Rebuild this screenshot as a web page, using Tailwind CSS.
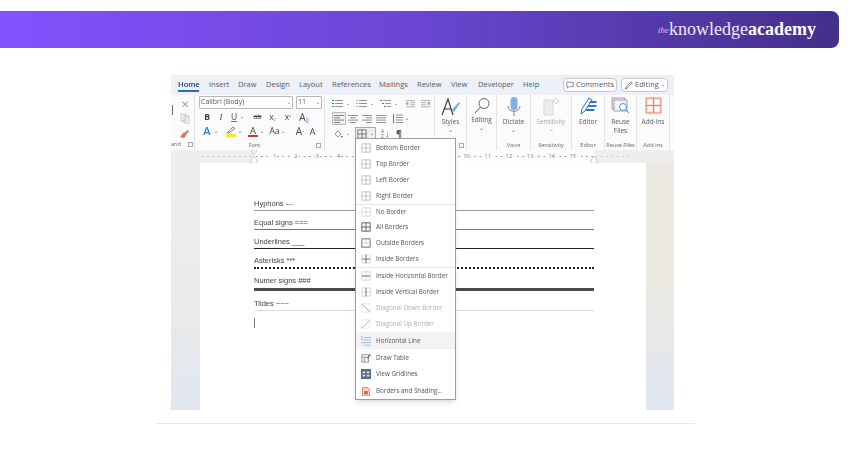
<!DOCTYPE html>
<html lang="en">

<head>
    <meta charset="UTF-8">
    <title>Horizontal Line in Word</title>
    <script src="https://cdn.jsdelivr.net/npm/@tailwindcss/browser@4"></script>
</head>

<body class="bg-white font-['Open_Sans',sans-serif] w-[850px] h-[450px] overflow-hidden">
    <svg class="hidden">
        <symbol id="grid" viewBox="0 0 12 12"><path d="M1 1h10v10H1zM6 1v10M1 6h10" fill="none" stroke="#a0a4aa" stroke-width=".8"/></symbol>
    </svg>

    <!-- banner -->
    <div class="mt-[11px] h-[37px] w-[839px] rounded-r-lg bg-gradient-to-r from-[#8451ff] via-[#6a46d2] to-[#43308a] flex items-center justify-end pr-[23px] font-['Liberation_Serif',serif] text-white">
        <span class="italic text-[9px] text-white/70 mt-[2px]">the</span>
        <span class="text-[18px] font-normal text-white/90">knowledge</span>
        <span class="text-[18px] font-bold">academy</span>
    </div>

    <!-- word window -->
    <div class="relative ml-[171px] mt-[27px] w-[503px] h-[335px] flex flex-col text-[#55595f] blur-[0.4px]">
        <!-- tabs -->
        <div class="h-5 bg-[#edf1f7] flex items-center text-[7.5px] pl-[7px] shrink-0">
            <span class="w-[31px] text-[#24405f] font-semibold relative">Home<span class="absolute left-0 top-[11px] h-[1.5px] w-[21px] bg-[#2b6cb8]"></span></span>
            <span class="w-[29px]">Insert</span>
            <span class="w-[28px]">Draw</span>
            <span class="w-[33px]">Design</span>
            <span class="w-[33px]">Layout</span>
            <span class="w-[47px]">References</span>
            <span class="w-[38px]">Mailings</span>
            <span class="w-[34px]">Review</span>
            <span class="w-[27px]">View</span>
            <span class="w-[45px]">Developer</span>
            <span class="w-[40px]">Help</span>
            <span class="w-[54px] h-[14px] bg-white border border-[#c6c9cd] rounded-sm flex items-center justify-center gap-[2px]">
                <svg class="w-2 h-2" viewBox="0 0 10 10"><path d="M1 1.500h8v5.500H4L2 9V7H1z" fill="none" stroke="#555" stroke-width=".8"/></svg>Comments</span>
            <span class="ml-1 w-[47px] h-[14px] bg-white border border-[#c6c9cd] rounded-sm flex items-center justify-center gap-[2px]">
                <svg class="w-[9px] h-[9px]" viewBox="0 0 10 10"><path d="M1.500 9l1-3L8 1l1.200 1.200L4 7.500z" fill="none" stroke="#555" stroke-width=".8"/></svg>Editing<span class="text-[5px]">⌄</span></span>
        </div>

        <!-- ribbon -->
        <div class="h-[55px] bg-[#fbfbfb] flex shrink-0 text-[6.5px] relative">
            <!-- clipboard -->
            <div class="w-[24px] border-r border-[#e3e3e3] flex flex-col items-end pr-[4px] pt-[2px] text-[#9aa0a6] relative">
                <span class="text-[10px] leading-[14px] pr-[1px]">✕</span>
                <svg class="w-[10px] h-[11px] mt-[2px]" viewBox="0 0 10 11"><path d="M1 1h5v7H1zM4 3h5v7H4z" fill="#f5f5f5" stroke="#b6bbc0" stroke-width=".8"/></svg>
                <svg class="w-[11px] h-[10px] mt-[5px]" viewBox="0 0 11 10"><path d="M1 8l4-5 3 2-3 4z" fill="#e8744f"/><path d="M6 3l3-2 1 2-3 2z" fill="#8a8f96"/></svg>
                <span class="absolute left-[1px] top-[10px] w-px h-[10px] bg-[#666]"></span>
                <span class="absolute left-0 bottom-[2px] text-[5.5px] text-[#666]">and</span>
                <span class="absolute left-[17px] bottom-[3px] w-[5px] h-[5px] border border-[#aaa]"></span>
            </div>
            <!-- font -->
            <div class="w-[130px] border-r border-[#e3e3e3] pl-[4px] pt-[1px] relative">
                <div class="flex gap-[3px] h-[13px] text-[7px]">
                    <div class="w-[94px] bg-white border border-[#b5b8bc] rounded-[1px] flex justify-between items-center px-[1px]"><span>Calibri (Body)</span><span class="text-[5px]">⌄</span></div>
                    <div class="w-[26px] bg-white border border-[#b5b8bc] rounded-[1px] flex justify-between items-center px-[1px]"><span>11</span><span class="text-[5px]">⌄</span></div>
                </div>
                <div class="flex items-center h-[14px] mt-[1px] text-[8.5px] text-[#444]">
                    <b class="w-[14px] text-center ml-[1px] font-bold">B</b><i class="w-[14px] text-center font-['Liberation_Serif']">I</i><span class="w-[12px] text-center underline decoration-[#4a7cc0]">U</span><span class="w-[10px] text-[5px]">⌄</span><span class="w-[15px] text-center line-through text-[7px]">ab</span><span class="w-[15px] text-center">x<sub class="text-[4px] text-[#3f7ec7]">2</sub></span><span class="w-[16px] text-center">x<sup class="text-[4px] text-[#3f7ec7]">2</sup></span><span class="w-[16px] text-center text-[10px]">A<span class="text-[#8c6cd0] text-[8px]">ᵨ</span></span>
                </div>
                <div class="flex items-center h-[15px] text-[11px] text-[#444]">
                    <span class="w-[14px] text-center text-[#2f7fd4] font-semibold ml-[1px]">A</span><span class="w-[10px] text-[5px]">⌄</span>
                    <span class="w-[14px] flex flex-col items-center"><svg class="w-[10px] h-[8px]" viewBox="0 0 9 7"><path d="M1 6l5-5 2 1-5 4z" fill="none" stroke="#666" stroke-width=".8"/></svg><span class="w-[10px] h-[2.500px] bg-[#f7e43a]"></span></span><span class="w-[8px] text-[5px]">⌄</span>
                    <span class="w-[14px] flex flex-col items-center leading-[9px] text-[9.5px]">A<span class="w-[10px] h-[2.500px] bg-[#d9312b]"></span></span><span class="w-[8px] text-[5px]">⌄</span>
                    <span class="w-[13px] text-[8.5px] text-center">Aa</span><span class="w-[12px] text-[5px]">⌄</span>
                    <span class="w-[14px] text-center text-[10px]">A<sup class="text-[4px]">^</sup></span><span class="w-[13px] text-center text-[9px]">A<sup class="text-[4px]">ˇ</sup></span>
                </div>
                <div class="absolute left-0 right-0 bottom-[1px] text-center text-[5.5px] text-[#666] pr-[10px]">Font</div>
                <span class="absolute right-[3px] bottom-[2px] w-[5px] h-[5px] border border-[#aaa]"></span>
            </div>
            <!-- paragraph -->
            <div class="w-[110px] border-r border-[#e3e3e3] pl-[7px] pt-[2px] relative">
                <div class="flex items-center gap-[3px] h-[13px] text-[#2f6fb8]">
                    <svg class="w-[11px] h-[9px]" viewBox="0 0 11 9"><path d="M3 1.500h8M3 4.500h8M3 7.500h8" stroke="#777" stroke-width=".8"/><path d="M0 1h2v1H0zM0 4h2v1H0zM0 7h2v1H0z" fill="#2f7fd4"/></svg><span class="text-[5px] text-[#555] w-[7px]">⌄</span>
                    <svg class="w-[11px] h-[9px]" viewBox="0 0 11 9"><path d="M3 1.500h8M3 4.500h8M3 7.500h8" stroke="#777" stroke-width=".8"/><path d="M0 1h2v1H0zM0 4h2v1H0zM0 7h2v1H0z" fill="#8fb4de"/></svg><span class="text-[5px] text-[#555] w-[7px]">⌄</span>
                    <svg class="w-[11px] h-[9px]" viewBox="0 0 11 9"><path d="M3 1.500h8M5 4.500h6M7 7.500h4" stroke="#888" stroke-width=".8"/><path d="M0 1h2v1H0zM2 4h2v1H2zM4 7h2v1H4z" fill="#2f7fd4"/></svg><span class="text-[5px] text-[#555] w-[9px]">⌄</span>
                    <svg class="w-[9px] h-[9px]" viewBox="0 0 11 9"><path d="M0 1h11M5 3.500h6M5 6h6M0 8.500h11" stroke="#888" stroke-width=".8"/><path d="M0 3h3v3H0z" fill="#7aa8dc"/></svg>
                    <svg class="w-[9px] h-[9px] ml-[3px]" viewBox="0 0 11 9"><path d="M0 1h11M0 3.500h6M0 6h6M0 8.500h11" stroke="#888" stroke-width=".8"/><path d="M8 3h3v3H8z" fill="#7aa8dc"/></svg>
                </div>
                <div class="flex items-center h-[15px] mt-[1px]">
                    <span class="w-[14px] h-[13px] border border-[#b5b8bc] rounded-[1px] bg-[#efefef] flex items-center justify-center"><svg class="w-[10px] h-[8px]" viewBox="0 0 10 8"><path d="M0 .5h10M0 2.800h6M0 5.100h10M0 7.500h6" stroke="#666" stroke-width=".8"/></svg></span>
                    <svg class="w-[10px] h-[8px] ml-[2px]" viewBox="0 0 10 8"><path d="M0 .5h10M2 2.800h6M0 5.100h10M2 7.500h6" stroke="#777" stroke-width=".8"/></svg>
                    <svg class="w-[10px] h-[8px] ml-[4px]" viewBox="0 0 10 8"><path d="M0 .5h10M4 2.800h6M0 5.100h10M4 7.500h6" stroke="#777" stroke-width=".8"/></svg>
                    <svg class="w-[10px] h-[8px] ml-[4px]" viewBox="0 0 10 8"><path d="M0 .5h10M0 2.800h10M0 5.100h10M0 7.500h10" stroke="#777" stroke-width=".8"/></svg>
                    <svg class="w-[11px] h-[9px] ml-[6px]" viewBox="0 0 11 9"><path d="M4 1h7M4 3.500h7M4 6h7M4 8.500h7" stroke="#777" stroke-width=".8"/><path d="M1.500 0v9" stroke="#2f7fd4" stroke-width="1"/></svg><span class="text-[5px] text-[#555] ml-[2px]">⌄</span>
                </div>
                <div class="flex items-center h-[15px]">
                    <svg class="w-[10px] h-[10px] ml-[1px]" viewBox="0 0 10 10"><path d="M2 5l3-3 3 3-3 3z" fill="none" stroke="#777" stroke-width=".8"/><path d="M8 7h1.500v1.500H8z" fill="#666"/></svg><span class="text-[5px] ml-[3px] w-[9px]">⌄</span>
                    <span class="w-[21px] h-[13px] border border-[#a8abaf] bg-[#efefef] flex items-center justify-center gap-[3px] text-[5px]"><svg class="w-[10px] h-[10px]" viewBox="0 0 12 12"><path d="M1 1h10v10H1zM6 1v10M1 6h10" fill="none" stroke="#555" stroke-width=".9"/></svg>⌄</span>
                    <span class="ml-[4px] w-[5px] flex flex-col items-center text-[5px] leading-[5px] text-[#2f7fd4]"><span>A</span><span>Z</span></span>
                    <span class="text-[9px] text-[#555] w-[6px]">↓</span>
                    <span class="ml-[5px] text-[9px] font-bold text-[#555]">¶</span>
                </div>
            </div>
            <!-- big buttons -->
            <div class="w-[32px] border-r border-[#e3e3e3] flex flex-col items-center pt-[2px] relative">
                <svg class="w-[21px] h-[19px]" viewBox="0 0 21 19"><path d="M2 18L8 2l5 16M4.500 12h7" fill="none" stroke="#333" stroke-width="1.100"/><path d="M12 13l7-8 1 1-6 9z" fill="#6ea8dc"/></svg>
                <span class="mt-[1px]">Styles</span><span class="text-[6px] leading-[7px]">⌄</span>
                <span class="absolute right-[2px] bottom-[2px] w-[5px] h-[5px] border border-[#aaa]"></span>
            </div>
            <div class="w-[30px] border-r border-[#e3e3e3] flex flex-col items-center pt-[2px]">
                <svg class="w-[18px] h-[17px]" viewBox="0 0 18 17"><circle cx="11" cy="6.500" r="5" fill="none" stroke="#555" stroke-width=".9"/><path d="M7.500 10L2 16" stroke="#555" stroke-width="1"/></svg>
                <span class="mt-[1px]">Editing</span><span class="text-[6px] leading-[7px]">⌄</span>
            </div>
            <div class="w-[34px] border-r border-[#e3e3e3] flex flex-col items-center pt-[2px] relative">
                <svg class="w-[14px] h-[19px]" viewBox="0 0 14 19"><rect x="3.500" y="0" width="7" height="13" rx="3.500" fill="#7fb0e6"/><path d="M1 9c0 7 12 7 12 0M7 14v5" fill="none" stroke="#666" stroke-width=".8"/></svg>
                <span class="mt-[1px]">Dictate</span><span class="text-[6px] leading-[7px]">⌄</span>
                <span class="absolute bottom-[1px] text-[5.5px] text-[#666]">Voice</span>
            </div>
            <div class="w-[41px] border-r border-[#e3e3e3] flex flex-col items-center pt-[2px] relative text-[#a6a9ad]">
                <svg class="w-[17px] h-[19px]" viewBox="0 0 17 19"><path d="M1 3h9v15H1z" fill="#ececec" stroke="#d0d0d0" stroke-width=".7"/><path d="M10 4l3-3 3 3-3 3z" fill="none" stroke="#c8c8c8" stroke-width=".8"/></svg>
                <span class="mt-[1px] text-[6.2px]">Sensitivity</span><span class="text-[6px] leading-[7px]">⌄</span>
                <span class="absolute bottom-[1px] text-[5.5px] text-[#666]">Sensitivity</span>
            </div>
            <div class="w-[33px] border-r border-[#e3e3e3] flex flex-col items-center pt-[2px] relative">
                <svg class="w-[19px] h-[18px]" viewBox="0 0 19 18"><path d="M2 17l1-5 7-11 3 2-7 11z" fill="none" stroke="#2f78c8" stroke-width="1"/><path d="M9 8h9l-1 2H8zM7 12h9l-1 2H6zM11 4h7l-1 2h-7z" fill="#2f78c8"/></svg>
                <span class="mt-[2px]">Editor</span>
                <span class="absolute bottom-[1px] text-[5.5px] text-[#666]">Editor</span>
            </div>
            <div class="w-[32px] border-r border-[#e3e3e3] flex flex-col items-center pt-[2px] relative">
                <svg class="w-[19px] h-[18px]" viewBox="0 0 19 18"><path d="M1 1h13v11H1z" fill="#e6e6e6" stroke="#8a8f96" stroke-width=".8"/><path d="M3 3h13v11H3z" fill="#f4f4f4" stroke="#8a8f96" stroke-width=".8"/><circle cx="12" cy="10" r="3.500" fill="#fff" stroke="#3f87d0" stroke-width=".9"/><path d="M14.500 12.500L18 16" stroke="#3f87d0" stroke-width="1"/></svg>
                <span class="mt-[2px] leading-[9px] text-center">Reuse Files</span>
                <span class="absolute bottom-[1px] text-[5.5px] text-[#666] whitespace-nowrap">Reuse Files</span>
            </div>
            <div class="w-[33px] border-r border-[#e3e3e3] flex flex-col items-center pt-[2px] relative">
                <svg class="w-[17px] h-[17px]" viewBox="0 0 17 17"><path d="M1 1h15v15H1zM8.500 1v15M1 8.500h15" fill="#fbe3da" stroke="#e8805e" stroke-width="1"/><path d="M3 3h4v4H3zM10 3h4v4h-4zM3 10h4v4H3zM10 10h4v4h-4z" fill="#fff"/></svg>
                <span class="mt-[3px]">Add-ins</span>
                <span class="absolute bottom-[1px] text-[5.5px] text-[#666]">Add-ins</span>
            </div>
        </div>

        <!-- ruler -->
        <div class="h-[13px] shrink-0 flex text-[5.5px] text-[#777] bg-[#eeeeee] relative">
            <div class="w-[29px]"></div>
            <div class="w-[54px] bg-[radial-gradient(circle,#bbb_0.5px,transparent_0.6px)] bg-[length:5.330px_13px]"></div>
            <div class="w-[340px] bg-[#fdfdfd] bg-[radial-gradient(circle,#999_0.5px,transparent_0.6px)] bg-[length:5.330px_13px] flex items-center pl-[10px]">
                <span class="w-[21.300px] text-center"><span class="bg-[#fdfdfd] px-[1px]">1</span></span>
                <span class="w-[21.300px] text-center"><span class="bg-[#fdfdfd] px-[1px]">2</span></span>
                <span class="w-[21.300px] text-center"><span class="bg-[#fdfdfd] px-[1px]">3</span></span>
                <span class="w-[21.300px] text-center"><span class="bg-[#fdfdfd] px-[1px]">4</span></span>
                <span class="w-[106.500px]"></span>
                <span class="w-[21.300px] text-center"><span class="bg-[#fdfdfd] px-[1px]">10</span></span>
                <span class="w-[21.300px] text-center"><span class="bg-[#fdfdfd] px-[1px]">11</span></span>
                <span class="w-[21.300px] text-center"><span class="bg-[#fdfdfd] px-[1px]">12</span></span>
                <span class="w-[21.300px] text-center"><span class="bg-[#fdfdfd] px-[1px]">13</span></span>
                <span class="w-[21.300px] text-center"><span class="bg-[#fdfdfd] px-[1px]">14</span></span>
                <span class="w-[21.300px] text-center"><span class="bg-[#fdfdfd] px-[1px]">15</span></span>
            </div>
            <div class="w-[36px] bg-[radial-gradient(circle,#ccc_0.5px,transparent_0.6px)] bg-[length:5.330px_13px]"></div>
            <svg class="absolute left-[79px] top-0 w-2 h-[13px]" viewBox="0 0 8 13"><path d="M1 0h6L4 5zM4 6l3 4v3H1v-3z" fill="#fff" stroke="#b0b0b0" stroke-width=".6"/></svg>
            <svg class="absolute left-[419px] top-[6px] w-2 h-[7px]" viewBox="0 0 8 7"><path d="M4 0l3 4v3H1V4z" fill="#fff" stroke="#b0b0b0" stroke-width=".6"/></svg>
        </div>

        <!-- document -->
        <div class="flex-1 flex min-h-0 -mt-px">
            <div class="w-[29px] bg-gradient-to-b from-[#eeeeee] via-[#ebebe9] to-[#e0e7f0]"></div>
            <div class="w-[446px] bg-white pl-[54px] pr-[52px] pt-[36px] font-['Liberation_Sans',sans-serif] text-[7.5px] text-[#444]">
                <div class="h-[13px] border-b border-[#9a9a9a] leading-[11px]">Hyphons ---</div>
                <div class="h-[19px] pt-[6px] border-b border-[#777] leading-[11px]">Equal signs ===</div>
                <div class="h-[19px] pt-[6px] border-b-[1.500px] border-[#222] leading-[11px]">Underlines ___</div>
                <div class="h-[20px] pt-[6px] border-b-2 border-dotted border-[#222] leading-[11px]">Asterisks ***</div>
                <div class="h-[22px] pt-[6px] border-b-[3px] border-[#4a4a4a] leading-[11px]">Numer signs ###</div>
                <div class="h-[20px] pt-[7px] border-b border-[#ddd] leading-[11px]">Tildes ~~~</div>
                <div class="w-px h-[10px] bg-[#777] mt-[7px]"></div>
            </div>
            <div class="w-[28px] bg-gradient-to-b from-[#ebe8e2] via-[#ebe8e2] to-[#e0e7f0]"></div>
        </div>

        <!-- borders dropdown -->
        <div class="absolute left-[184px] top-[63px] w-[101px] h-[262px] bg-white border border-[#9a9da1] shadow-md text-[6.3px] text-[#555] py-px">
            <div class="h-4 flex items-center gap-[5px] pl-[5px]"><svg class="w-[10px] h-[10px]"><use href="#grid"/></svg>Bottom Border</div>
            <div class="h-4 flex items-center gap-[5px] pl-[5px]"><svg class="w-[10px] h-[10px]"><use href="#grid"/></svg>Top Border</div>
            <div class="h-4 flex items-center gap-[5px] pl-[5px]"><svg class="w-[10px] h-[10px]"><use href="#grid"/></svg>Left Border</div>
            <div class="h-4 flex items-center gap-[5px] pl-[5px]"><svg class="w-[10px] h-[10px]"><use href="#grid"/></svg>Right Border</div>
            <div class="border-t border-[#e5e5e5]"></div>
            <div class="h-[14px] flex items-center gap-[5px] pl-[5px]"><svg class="w-[10px] h-[10px] opacity-60"><use href="#grid"/></svg>No Border</div>
            <div class="h-4 flex items-center gap-[5px] pl-[5px]"><svg class="w-[10px] h-[10px]" viewBox="0 0 12 12"><path d="M1 1h10v10H1zM6 1v10M1 6h10" fill="none" stroke="#444" stroke-width="1"/></svg>All Borders</div>
            <div class="h-4 flex items-center gap-[5px] pl-[5px]"><svg class="w-[10px] h-[10px]" viewBox="0 0 12 12"><path d="M1 1h10v10H1z" fill="none" stroke="#555" stroke-width="1"/><path d="M6 1v10M1 6h10" stroke="#bbb" stroke-width=".7"/></svg>Outside Borders</div>
            <div class="h-4 flex items-center gap-[5px] pl-[5px]"><svg class="w-[10px] h-[10px]" viewBox="0 0 12 12"><path d="M1 1h10v10H1z" fill="none" stroke="#ccc" stroke-width=".7"/><path d="M6 1v10M1 6h10" stroke="#555" stroke-width="1"/></svg>Inside Borders</div>
            <div class="border-t border-[#e5e5e5]"></div>
            <div class="h-4 flex items-center gap-[5px] pl-[5px]"><svg class="w-[10px] h-[10px]" viewBox="0 0 12 12"><path d="M1 1h10v10H1zM6 1v10" fill="none" stroke="#bbb" stroke-width=".7"/><path d="M1 6h10" stroke="#555" stroke-width="1"/></svg>Inside Horizontal Border</div>
            <div class="h-4 flex items-center gap-[5px] pl-[5px]"><svg class="w-[10px] h-[10px]" viewBox="0 0 12 12"><path d="M1 1h10v10H1zM1 6h10" fill="none" stroke="#bbb" stroke-width=".7"/><path d="M6 1v10" stroke="#555" stroke-width="1"/></svg>Inside Vertical Border</div>
            <div class="h-4 flex items-center gap-[5px] pl-[5px] text-[#b0b0b0]"><svg class="w-[10px] h-[10px]" viewBox="0 0 12 12"><path d="M1 1h10v10H1z" fill="none" stroke="#ddd" stroke-width=".7"/><path d="M1 1l10 10" stroke="#888" stroke-width=".8"/></svg>Diagonal Down Border</div>
            <div class="h-4 flex items-center gap-[5px] pl-[5px] text-[#b0b0b0]"><svg class="w-[10px] h-[10px]" viewBox="0 0 12 12"><path d="M1 1h10v10H1z" fill="none" stroke="#ddd" stroke-width=".7"/><path d="M1 11L11 1" stroke="#999" stroke-width=".8"/></svg>Diagonal Up Border</div>
            <div class="h-[17px] flex items-center gap-[5px] pl-[5px] bg-[#f3f3f3]"><svg class="w-[10px] h-[10px]" viewBox="0 0 12 12"><path d="M3 2h9M3 5h9M0 8h12M3 11h9" stroke="#7aa3cf" stroke-width=".8"/><path d="M0 1h2M0 4h2" stroke="#666" stroke-width=".8"/></svg>Horizontal Line</div>
            <div class="h-[17px] flex items-center gap-[5px] pl-[5px]"><svg class="w-[10px] h-[10px]" viewBox="0 0 12 12"><path d="M1 2h8v9H1zM1 5h8M4 5v6" fill="none" stroke="#666" stroke-width=".8"/><path d="M7 6l4-5 1 1-4 5z" fill="#3f7ec7"/></svg>Draw Table</div>
            <div class="h-4 flex items-center gap-[5px] pl-[5px]"><svg class="w-[10px] h-[10px]" viewBox="0 0 12 12"><path d="M0 0h12v12H0z" fill="#5b6b85"/><path d="M2 3h3v2H2zM7 3h3v2H7zM2 7h3v2H2zM7 7h3v2H7z" fill="#dfe6f2"/></svg>View Gridlines</div>
            <div class="h-[17px] flex items-center gap-[5px] pl-[5px]"><svg class="w-[10px] h-[10px]" viewBox="0 0 12 12"><path d="M2 2h6l2 2v8H2z" fill="#f6d9d0" stroke="#d8583a" stroke-width=".9"/><path d="M4 6h4v4H4z" fill="#d8583a"/></svg>Borders and Shading...</div>
        </div>
    </div>

    <!-- divider -->
    <div class="ml-[155px] mt-[13px] w-[540px] border-t border-[#e8e8e8]"></div>
</body>

</html>
